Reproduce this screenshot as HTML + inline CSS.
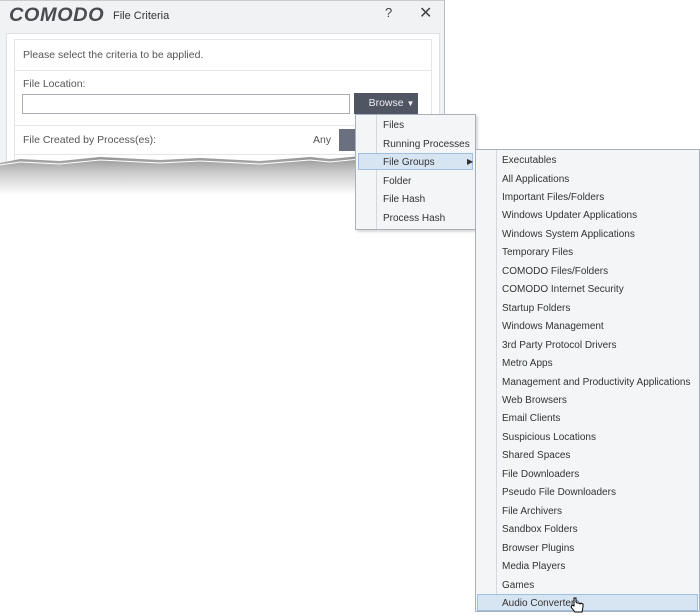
<!DOCTYPE html>
<html><head><style>
body{margin:0;width:700px;height:616px;background:#fff;position:relative;overflow:hidden;font-family:"Liberation Sans",sans-serif;}
.a{position:absolute}
.mi{position:absolute;font-size:10px;color:#333;}
</style></head><body>
<div class="a" style="left:0;top:0;width:444px;height:170px;background:#f1f2f4;border-right:1px solid #b8bcc4;border-top:1px solid #c8ccd2"></div>
<div class="a" style="left:9px;top:5px;font-size:19px;font-weight:bold;font-style:italic;color:#4a4c52;letter-spacing:0.5px;transform:scaleX(1.05);transform-origin:left">COMODO</div>
<div class="a" style="left:113px;top:10px;font-size:11px;color:#333">File Criteria</div>
<div class="a" style="left:385px;top:5px;font-size:13px;color:#444">?</div>
<div class="a" style="left:419px;top:3px;font-size:16px;color:#444">✕</div>
<div class="a" style="left:6px;top:33px;width:432px;height:140px;background:#fff;border:1px solid #dde0e4"></div>
<div class="a" style="left:14px;top:39px;width:416px;height:140px;border:1px solid #e4e6ea"></div>
<div class="a" style="left:14px;top:70px;width:417px;height:1px;background:#e4e6ea"></div>
<div class="a" style="left:14px;top:125px;width:417px;height:1px;background:#e4e6ea"></div>
<div class="a" style="left:14px;top:154px;width:417px;height:1px;background:#e4e6ea"></div>
<div class="a" style="left:23px;top:49px;font-size:10.5px;color:#555">Please select the criteria to be applied.</div>
<div class="a" style="left:23px;top:78px;font-size:10.5px;color:#555">File Location:</div>
<div class="a" style="left:22px;top:94px;width:326px;height:18px;border:1px solid #a8acb2;background:#fff"></div>
<div class="a" style="left:354px;top:93px;width:64px;height:21px;background:#505564;color:#eee;font-size:10.5px;line-height:21px">&nbsp;&nbsp;&nbsp;&nbsp;&nbsp;Browse <span style="font-size:8px">▼</span></div>
<div class="a" style="left:23px;top:134px;font-size:10.5px;color:#555">File Created by Process(es):</div>
<div class="a" style="left:313px;top:134px;font-size:10.5px;color:#555">Any</div>
<div class="a" style="left:339px;top:129px;width:30px;height:22px;background:#6b7080"></div>
<svg class="a" style="left:0;top:145px" width="446" height="50">
<defs><linearGradient id="g" x1="0" y1="0" x2="0" y2="1"><stop offset="0" stop-color="#8a8a8a"/><stop offset="0.4" stop-color="#c8c8c8"/><stop offset="1" stop-color="#fff"/></linearGradient></defs>
<path d="M0 18 L20 14 L60 16 L100 12 L160 15 L200 13 L260 16 L310 12 L330 14 L360 11 L446 10 L446 50 L0 50Z" fill="url(#g)"/>
<path d="M0 20 L20 17 L60 19 L100 15 L160 18 L200 16 L260 19 L310 15 L330 17 L360 14 L446 13" fill="none" stroke="#fff" stroke-width="1"/>
</svg>
<!-- menu 1 -->
<div class="a" style="left:355px;top:114px;width:119px;height:114px;background:#f4f5f7;border:1px solid #a9b0bc;box-shadow:2px 2px 2px rgba(0,0,0,.15)"></div>
<div class="a" style="left:376px;top:115px;width:1px;height:114px;background:#d4d8de"></div>
<div class="a" style="left:358px;top:153px;width:115px;height:17px;background:#d7e5f3;border:1px solid #9fc0e0;box-sizing:border-box"></div>
<div class="mi" style="left:383px;top:120px">Files</div>
<div class="mi" style="left:383px;top:139px">Running Processes</div>
<div class="mi" style="left:383px;top:157px">File Groups</div>
<div class="a" style="left:467px;top:157px;font-size:8px;color:#333">▶</div>
<div class="mi" style="left:383px;top:176px">Folder</div>
<div class="mi" style="left:383px;top:194px">File Hash</div>
<div class="mi" style="left:383px;top:213px">Process Hash</div>
<!-- menu 2 -->
<div class="a" style="left:475px;top:149px;width:225px;height:463px;background:#f4f5f7;border:1px solid #a9b0bc;box-sizing:border-box"></div>
<div class="a" style="left:496px;top:150px;width:1px;height:461px;background:#d4d8de"></div>
<div class="a" style="left:477px;top:594px;width:221px;height:17px;background:#d7e5f3;border:1px solid #9fc0e0;box-sizing:border-box"></div>
<div id="m2"></div>
<script>
var it=["Executables","All Applications","Important Files/Folders","Windows Updater Applications","Windows System Applications","Temporary Files","COMODO Files/Folders","COMODO Internet Security","Startup Folders","Windows Management","3rd Party Protocol Drivers","Metro Apps","Management and Productivity Applications","Web Browsers","Email Clients","Suspicious Locations","Shared Spaces","File Downloaders","Pseudo File Downloaders","File Archivers","Sandbox Folders","Browser Plugins","Media Players","Games","Audio Converters"];
var h="";it.forEach(function(t,i){h+='<div class="mi" style="left:502px;top:'+(155+i*18.46).toFixed(1)+'px">'+t+'</div>';});
document.getElementById("m2").innerHTML=h;
</script>
<svg class="a" style="left:570px;top:597px" width="14" height="16"><path d="M4 1 L4 9 L2 8 L1 10 L5 15 L12 15 L13 10 L13 7 L11 6 L10 7 L9 6 L7 6 L6 5 L6 1 Z" fill="#fff" stroke="#000" stroke-width="1"/></svg>
</body></html>
